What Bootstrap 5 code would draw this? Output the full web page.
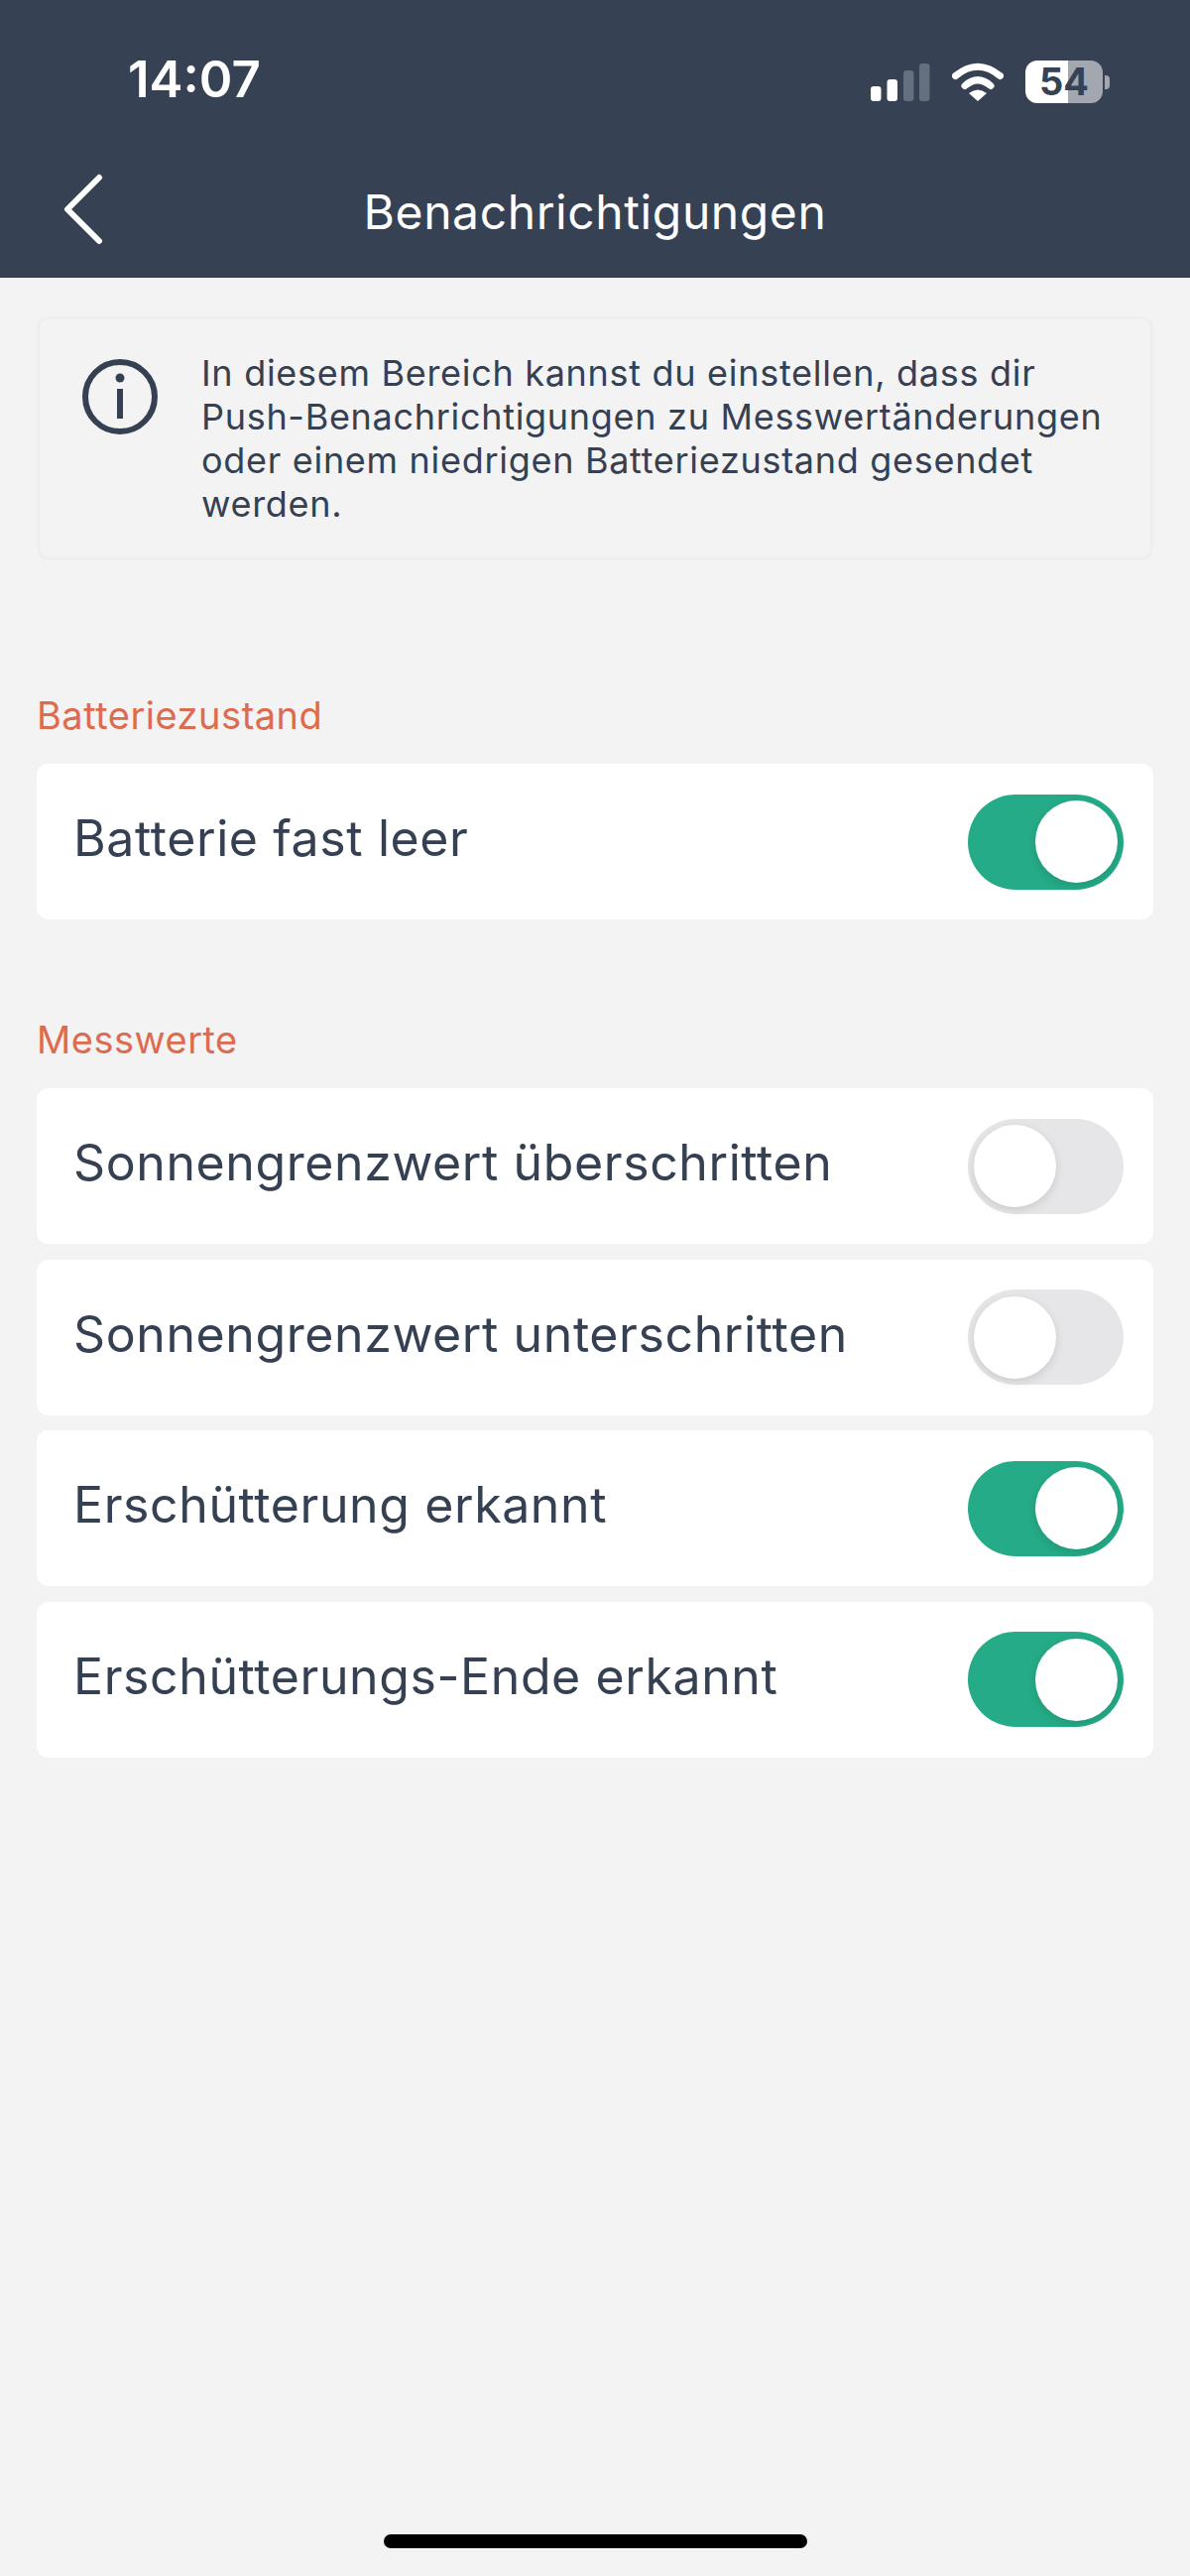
<!DOCTYPE html>
<html lang="de">
<head>
  <meta charset="UTF-8">
  <title>Benachrichtigungen</title>
  <link href="https://cdn.jsdelivr.net/npm/bootstrap@5.3.3/dist/css/bootstrap.min.css" rel="stylesheet">
  <style>
    body {
      font-family: "Inter", "Liberation Sans", sans-serif;
      background: #f3f3f3;
      color: #354052;
      height: 2597px;
      overflow: hidden;
    }
    .app-top {
      background: #364153;
      height: 280px;
      color: #fff;
    }
    .status-row {
      height: 112px;
      padding: 45px 81px 0 129px;
    }
    .status-time {
      font-size: 51px;
      font-weight: 600;
      line-height: 70px;
    }
    .status-icons {
      gap: 22px;
      padding-top: 16px;
    }
    .batt {
      width: 78px;
      height: 43px;
      border-radius: 12px;
      background: linear-gradient(90deg, #fff 0 55%, #a3a7af 55% 100%);
      color: #364153;
      font-weight: 700;
      font-size: 38px;
      line-height: 43px;
    }
    .batt-tip {
      width: 5px;
      height: 14px;
      background: #a3a7af;
      border-radius: 0 4px 4px 0;
      margin-left: 2px;
    }
    .title-row {
      height: 168px;
      padding: 0 106px 0 62px;
    }
    .title-text {
      font-size: 48px;
      line-height: 60px;
      letter-spacing: .6px;
      margin-top: 36px;
    }
    .back-icon { margin-top: 30px; }
    .page-body { padding: 39px 37px 0; }
    .info-box {
      height: 246px;
      border: 3px solid #eeeeee;
      border-radius: 12px;
      padding: 32px 30px 0 43px;
      gap: 44px;
    }
    .info-icon { margin-top: 8px; }
    .info-text {
      font-size: 36px;
      line-height: 44px;
      letter-spacing: .7px;
    }
    .sect-label {
      color: #dd6b4f;
      font-size: 38px;
      line-height: 46px;
      letter-spacing: .5px;
      margin-bottom: 26px;
    }
    .first-label { margin-top: 133px; }
    .next-label { margin-top: 98px; }
    .set-row {
      height: 157px;
      background: #fff;
      border-radius: 12px;
      padding: 0 30px 0 37px;
      margin-bottom: 15.5px;
    }
    .set-text {
      font-size: 50px;
      letter-spacing: .6px;
      margin-top: -6px;
    }
    .tgl {
      width: 157px;
      height: 96px;
      border-radius: 48px;
      background: #e6e6e8;
      position: relative;
      flex: none;
    }
    .tgl::after {
      content: "";
      position: absolute;
      top: 6.5px;
      left: 6px;
      width: 83px;
      height: 83px;
      border-radius: 50%;
      background: #fff;
      box-shadow: 0 3px 10px rgba(0,0,0,.12);
    }
    .tgl-on { background: #25ab87; }
    .tgl-on::after { left: 68px; }
    .home-bar {
      position: absolute;
      left: 387px;
      top: 2555px;
      width: 427px;
      height: 14px;
      border-radius: 7px;
      background: #000;
    }
  </style>
</head>
<body>

<div class="app-top">
  <div class="status-row d-flex align-items-start justify-content-between">
    <div class="status-time">14:07</div>
    <div class="status-icons d-flex align-items-center">
      <svg width="60" height="40" viewBox="0 0 60 40">
        <rect x="0" y="24" width="10.5" height="15" rx="3" fill="#fff"/>
        <rect x="16.5" y="17" width="10.5" height="22" rx="3" fill="#fff"/>
        <rect x="33" y="8" width="10.5" height="31" rx="3" fill="#666f7d"/>
        <rect x="49" y="1" width="10.5" height="38" rx="3" fill="#666f7d"/>
      </svg>
      <svg width="52" height="40" viewBox="0 0 52 40">
        <path d="M3.5 13.5 Q26 -5 48.5 13.5" fill="none" stroke="#fff" stroke-width="7" stroke-linecap="round"/>
        <path d="M13 23.5 Q26 12 39 23.5" fill="none" stroke="#fff" stroke-width="7" stroke-linecap="round"/>
        <path d="M17 31 Q26 24 35 31 L26 39 Z" fill="#fff"/>
      </svg>
      <div class="d-flex align-items-center">
        <div class="batt text-center">54</div>
        <div class="batt-tip"></div>
      </div>
    </div>
  </div>
  <div class="title-row d-flex align-items-center">
    <svg class="back-icon flex-shrink-0" width="44" height="72" viewBox="0 0 44 72">
      <path d="M38 4 L6 36 L38 68" fill="none" stroke="#fff" stroke-width="6" stroke-linecap="round" stroke-linejoin="round"/>
    </svg>
    <div class="title-text flex-grow-1 text-center">Benachrichtigungen</div>
  </div>
</div>

<div class="page-body">
  <div class="info-box d-flex align-items-start">
    <svg class="info-icon flex-shrink-0" width="76" height="76" viewBox="0 0 76 76">
      <circle cx="38" cy="38" r="35" fill="none" stroke="#354052" stroke-width="6"/>
      <circle cx="38" cy="19" r="4.5" fill="#354052"/>
      <rect x="35" y="30" width="6" height="30" fill="#354052"/>
    </svg>
    <div class="info-text">In diesem Bereich kannst du einstellen, dass dir<br>Push-Benachrichtigungen zu Messwertänderungen oder einem niedrigen Batteriezustand gesendet werden.</div>
  </div>

  <div class="sect-label first-label">Batteriezustand</div>
  <div class="set-row d-flex align-items-center justify-content-between">
    <span class="set-text">Batterie fast leer</span><span class="tgl tgl-on"></span>
  </div>

  <div class="sect-label next-label">Messwerte</div>
  <div class="set-row d-flex align-items-center justify-content-between">
    <span class="set-text">Sonnengrenzwert überschritten</span><span class="tgl"></span>
  </div>
  <div class="set-row d-flex align-items-center justify-content-between">
    <span class="set-text">Sonnengrenzwert unterschritten</span><span class="tgl"></span>
  </div>
  <div class="set-row d-flex align-items-center justify-content-between">
    <span class="set-text">Erschütterung erkannt</span><span class="tgl tgl-on"></span>
  </div>
  <div class="set-row d-flex align-items-center justify-content-between">
    <span class="set-text">Erschütterungs-Ende erkannt</span><span class="tgl tgl-on"></span>
  </div>
</div>

<div class="home-bar"></div>

<script src="https://cdn.jsdelivr.net/npm/bootstrap@5.3.3/dist/js/bootstrap.bundle.min.js"></script>
</body>
</html>
